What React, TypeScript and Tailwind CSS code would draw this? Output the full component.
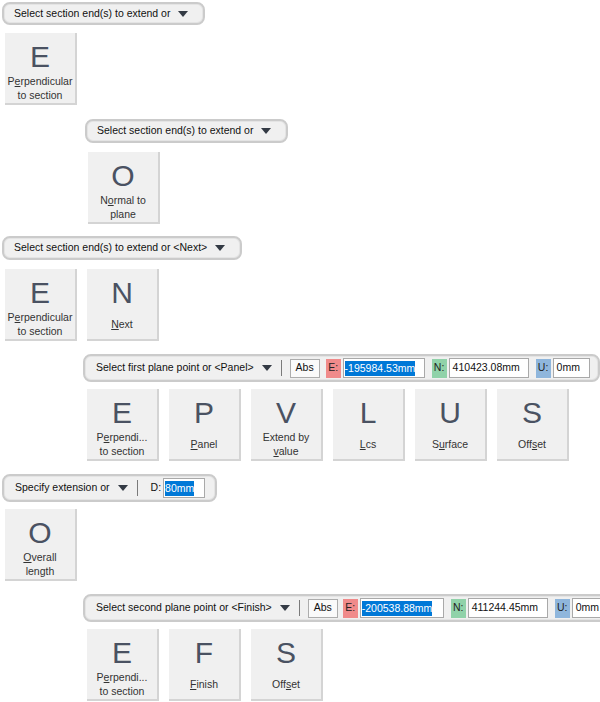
import React from 'react'

type Action = { letter: string; label: React.ReactNode }

function Caret() {
  return (
    <svg width="10" height="6" viewBox="0 0 10 6" className="shrink-0">
      <path d="M0 0h10L5 6z" fill="#333a44" />
    </svg>
  )
}

function Sep() {
  return <span className="h-[16px] w-px shrink-0 bg-[#7a7a7a]" />
}

function Key({ k }: { k: string }) {
  return <u className="underline-offset-[1px]">{k}</u>
}

function ActionButton({ letter, label }: Action) {
  return (
    <div className="flex h-[72px] w-[72px] shrink-0 flex-col border-b-2 border-r-2 border-[#d4d4d4] bg-[#f0f0f0] pt-[9px]">
      <div className="h-[30px] text-center text-[30px] leading-[30px] text-[#4a5262]">{letter}</div>
      <div className="flex flex-1 items-center justify-center px-[2px] pt-[1px] text-center text-[10.5px] leading-[14px] text-[#333]">
        <div>{label}</div>
      </div>
    </div>
  )
}

function Prompt({ children, h }: { children: React.ReactNode; h: string }) {
  return (
    <div
      className={`flex w-max shrink-0 items-center rounded-[8px] border-2 border-[#cbcbcb] bg-[#f0f0f0] text-[10.5px] text-[#111] shadow-[inset_0_0_0_1px_#e4e4e4] ${h}`}
    >
      {children}
    </div>
  )
}

function Coord({ name, tone, value, width, selected }: { name: string; tone: string; value: string; width: string; selected?: boolean }) {
  return (
    <div className="flex items-center gap-[2px]">
      <span className={`flex h-[19px] w-[15px] items-center justify-center text-[10.5px] text-[#222] ${tone}`}>{name}</span>
      <span className={`flex h-[20px] items-center overflow-hidden whitespace-nowrap border border-[#a9a9a9] bg-white pl-[1px] text-[10.5px] ${width}`}>
        {selected ? <span className="bg-[#0078d7] leading-[15px] text-white">{value}</span> : <span className="pl-[2px]">{value}</span>}
      </span>
    </div>
  )
}

function Abs() {
  return (
    <span className="flex h-[19px] w-[30px] shrink-0 items-center justify-center border border-[#adadad] bg-[#fafafa] text-[10.5px]">
      Abs
    </span>
  )
}

const perp: Action = { letter: 'E', label: <>P<Key k="e" />rpendicular<br />to section</> }
const perpShort: Action = { letter: 'E', label: <>P<Key k="e" />rpendi...<br />to section</> }
const offset: Action = { letter: 'S', label: <>Off<Key k="s" />et</> }

export default function App() {
  return (
    <div className="flex h-[702px] w-[600px] flex-col overflow-hidden bg-white font-['Liberation_Sans',Arial,sans-serif]">
      {/* extend: first prompt */}
      <section className="ml-[2px] mt-[2px]">
        <Prompt h="h-[23px]">
          <div className="flex items-center gap-[8px] pl-[10px] pr-[15px]">
            <span>Select section end(s) to extend or</span>
            <Caret />
          </div>
        </Prompt>
        <div className="ml-[3px] mt-[8px] flex gap-[10px]">
          <ActionButton {...perp} />
        </div>
      </section>

      <section className="ml-[85px] mt-[14px]">
        <Prompt h="h-[24px]">
          <div className="flex items-center gap-[8px] pl-[10px] pr-[15px]">
            <span>Select section end(s) to extend or</span>
            <Caret />
          </div>
        </Prompt>
        <div className="ml-[3px] mt-[9px] flex gap-[10px]">
          <ActionButton letter="O" label={<>N<Key k="o" />rmal to<br />plane</>} />
        </div>
      </section>

      <section className="ml-[2px] mt-[12px]">
        <Prompt h="h-[24px]">
          <div className="flex items-center gap-[8px] pl-[10px] pr-[15px]">
            <span>Select section end(s) to extend or &lt;Next&gt;</span>
            <Caret />
          </div>
        </Prompt>
        <div className="ml-[3px] mt-[9px] flex gap-[10px]">
          <ActionButton {...perp} />
          <ActionButton letter="N" label={<><Key k="N" />ext</>} />
        </div>
      </section>

      {/* first plane point */}
      <section className="ml-[83px] mt-[13px]">
        <Prompt h="h-[28px]">
          <div className="flex items-center pl-[11px] pr-[8px]">
            <span>Select first plane point or &lt;Panel&gt;</span>
            <span className="ml-[8px]"><Caret /></span>
            <span className="ml-[9px] flex"><Sep /></span>
            <span className="ml-[8px]"><Abs /></span>
            <div className="ml-[6px] flex items-center gap-[7px]">
              <Coord name="E:" tone="bg-[#f08b8b]" value="-195984.53mm" width="w-[82px]" selected />
              <Coord name="N:" tone="bg-[#90d2a9]" value="410423.08mm" width="w-[80px]" />
              <Coord name="U:" tone="bg-[#8fb6dc]" value="0mm" width="w-[37px]" />
            </div>
          </div>
        </Prompt>
        <div className="ml-[4px] mt-[7px] flex gap-[10px]">
          <ActionButton {...perpShort} />
          <ActionButton letter="P" label={<><Key k="P" />anel</>} />
          <ActionButton letter="V" label={<>Extend by<br /><Key k="v" />alue</>} />
          <ActionButton letter="L" label={<><Key k="L" />cs</>} />
          <ActionButton letter="U" label={<>S<Key k="u" />rface</>} />
          <ActionButton {...offset} />
        </div>
      </section>

      {/* extension distance */}
      <section className="ml-[2px] mt-[13px]">
        <Prompt h="h-[28px]">
          <div className="flex items-center pl-[11px] pr-[10px]">
            <span>Specify extension or</span>
            <span className="ml-[8px]"><Caret /></span>
            <span className="ml-[9px] flex"><Sep /></span>
            <span className="ml-[13px]">D:</span>
            <span className="ml-[2px] flex h-[20px] w-[42px] items-center border border-[#a9a9a9] bg-white pl-[1px]">
              <span className="bg-[#0078d7] leading-[15px] text-white">80mm</span>
            </span>
          </div>
        </Prompt>
        <div className="ml-[3px] mt-[7px] flex gap-[10px]">
          <ActionButton letter="O" label={<><Key k="O" />verall<br />length</>} />
        </div>
      </section>

      {/* second plane point */}
      <section className="ml-[83px] mt-[13px]">
        <Prompt h="h-[28px]">
          <div className="flex items-center pl-[11px] pr-[8px]">
            <span>Select second plane point or &lt;Finish&gt;</span>
            <span className="ml-[8px]"><Caret /></span>
            <span className="ml-[9px] flex"><Sep /></span>
            <span className="ml-[8px]"><Abs /></span>
            <div className="ml-[5px] flex items-center gap-[7px]">
              <Coord name="E:" tone="bg-[#f08b8b]" value="-200538.88mm" width="w-[84px]" selected />
              <Coord name="N:" tone="bg-[#90d2a9]" value="411244.45mm" width="w-[80px]" />
              <Coord name="U:" tone="bg-[#8fb6dc]" value="0mm" width="w-[40px]" />
            </div>
          </div>
        </Prompt>
        <div className="ml-[4px] mt-[7px] flex gap-[10px]">
          <ActionButton {...perpShort} />
          <ActionButton letter="F" label={<><Key k="F" />inish</>} />
          <ActionButton {...offset} />
        </div>
      </section>
    </div>
  )
}
